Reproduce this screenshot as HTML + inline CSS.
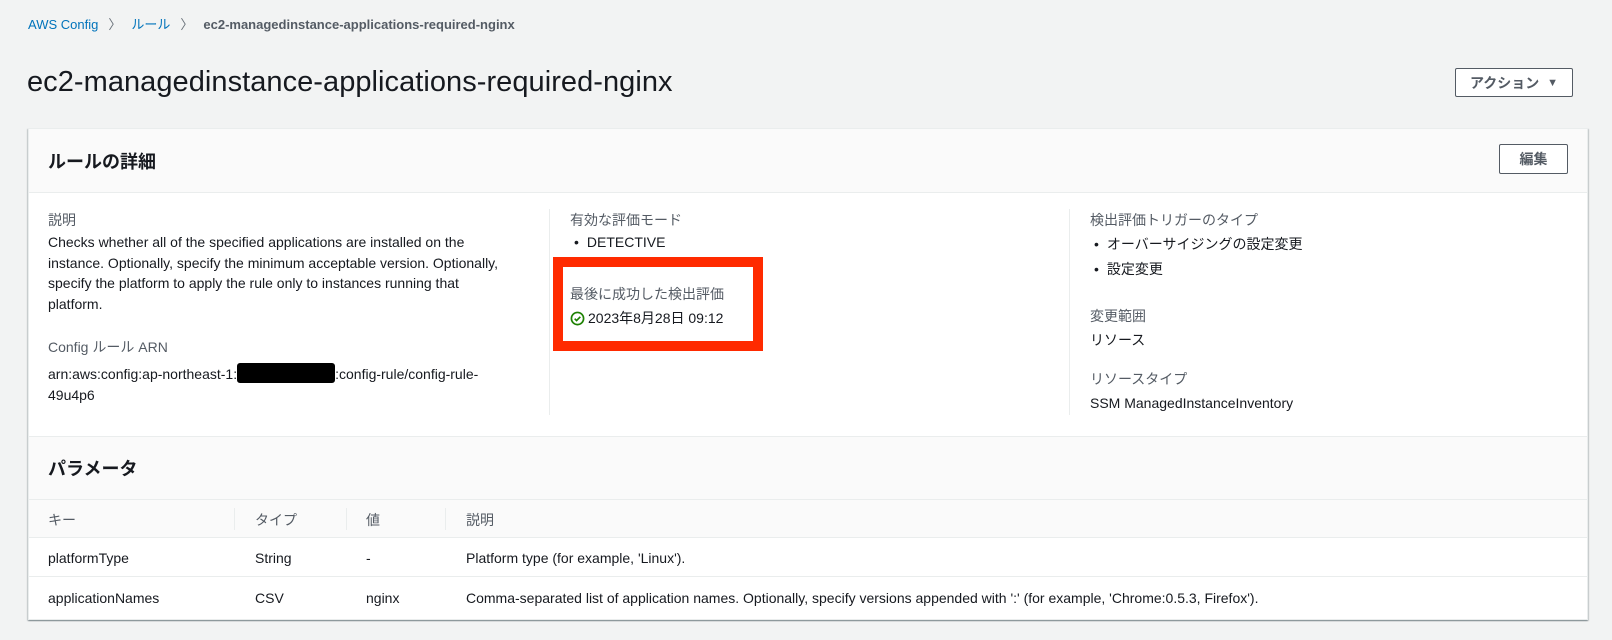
<!DOCTYPE html>
<html><head><meta charset="utf-8"><style>
*{box-sizing:border-box;margin:0;padding:0}
body{width:1612px;height:640px;background:#f2f3f3;font-family:"Liberation Sans","Noto Sans CJK JP",sans-serif;color:#16191f;font-size:14px;position:relative;overflow:hidden}
.a{position:absolute;white-space:nowrap}
.lbl{color:#545b64}
.link{color:#0073bb}
.card{position:absolute;left:28px;top:128px;width:1560px;height:492px;background:#fff;border:1px solid #eaeded;box-shadow:0 1px 1px rgba(0,28,36,.3),1px 1px 1px rgba(0,28,36,.15),-1px 1px 1px rgba(0,28,36,.15)}
.btn{position:absolute;border:1px solid #545b64;background:#fff;color:#545b64;font-weight:bold;font-size:14px;display:flex;align-items:center;justify-content:center;border-radius:2px}
.hd{position:absolute;left:0;width:100%;background:#fafafa;border-bottom:1px solid #eaeded}
.vl{position:absolute;width:1px;background:#eaeded}
.hl{position:absolute;left:0;width:100%;height:1px;background:#eaeded}
</style></head><body>
<div class="a" style="left:28px;top:14px;font-size:13px"><span class="link">AWS Config</span><span style="color:#687078;margin:0 10px">〉</span><span class="link">ルール</span><span style="color:#687078;margin:0 10px">〉</span><span style="color:#545b64;font-weight:bold">ec2-managedinstance-applications-required-nginx</span></div>
<div class="a" style="left:27px;top:66px;font-size:29px;letter-spacing:0.05px;color:#16191f">ec2-managedinstance-applications-required-nginx</div>
<div class="btn" style="left:1455px;top:68px;width:118px;height:29px">アクション&nbsp;&nbsp;<span style="font-size:11px">▼</span></div>
<div class="card">
 <div class="hd" style="top:0;height:64px"></div>
 <div class="a" style="left:19px;top:19px;font-size:18px;font-weight:bold">ルールの詳細</div>
 <div class="btn" style="left:1470px;top:15px;width:69px;height:30px">編集</div>
 <div class="vl" style="left:520px;top:80px;height:206px"></div>
 <div class="vl" style="left:1040px;top:80px;height:206px"></div>
 <div class="a lbl" style="left:19px;top:81px">説明</div>
 <div class="a" style="left:19px;top:103px;line-height:20.5px;white-space:normal;width:458px">Checks whether all of the specified applications are installed on the instance. Optionally, specify the minimum acceptable version. Optionally, specify the platform to apply the rule only to instances running that platform.</div>
 <div class="a lbl" style="left:19px;top:208px">Config ルール ARN</div>
 <div class="a" style="left:19px;top:234px;line-height:20.5px">arn:aws:config:ap-northeast-1:<span style="display:inline-block;width:98px;height:20px;background:#000;vertical-align:-4px;border-radius:3px"></span>:config-rule/config-rule-<br>49u4p6</div>
 <div class="a lbl" style="left:541px;top:81px">有効な評価モード</div>
 <div class="a" style="left:541px;top:105px"><span style="margin:0 8px 0 4px">•</span>DETECTIVE</div>
 <div class="a" style="left:524px;top:128px;width:210px;height:94px;border:10px solid #ff2a00"></div>
 <div class="a lbl" style="left:541px;top:155px">最後に成功した検出評価</div>
 <div class="a" style="left:541px;top:179px"><svg width="15" height="15" viewBox="0 0 16 16" style="vertical-align:-3px;margin-right:3px"><circle cx="8" cy="8" r="6.5" fill="none" stroke="#1d8102" stroke-width="1.8"/><path d="M5 8.2l2 2 4-4" fill="none" stroke="#1d8102" stroke-width="1.8"/></svg>2023年8月28日 09:12</div>
 <div class="a lbl" style="left:1061px;top:81px">検出評価トリガーのタイプ</div>
 <div class="a" style="left:1061px;top:105px"><span style="margin:0 8px 0 4px">•</span>オーバーサイジングの設定変更</div>
 <div class="a" style="left:1061px;top:130px"><span style="margin:0 8px 0 4px">•</span>設定変更</div>
 <div class="a lbl" style="left:1061px;top:177px">変更範囲</div>
 <div class="a" style="left:1061px;top:201px">リソース</div>
 <div class="a lbl" style="left:1061px;top:240px">リソースタイプ</div>
 <div class="a" style="left:1061px;top:266px">SSM ManagedInstanceInventory</div>
 <div class="hd" style="top:307px;height:64px;border-top:1px solid #eaeded"></div>
 <div class="a" style="left:19px;top:326px;font-size:18px;font-weight:bold">パラメータ</div>
 <div class="hd" style="top:371px;height:38px"></div>
 <div class="vl" style="left:205px;top:379px;height:22px"></div>
 <div class="vl" style="left:317px;top:379px;height:22px"></div>
 <div class="vl" style="left:416px;top:379px;height:22px"></div>
 <div class="a lbl" style="left:19px;top:381px">キー</div>
 <div class="a lbl" style="left:226px;top:381px">タイプ</div>
 <div class="a lbl" style="left:337px;top:381px">値</div>
 <div class="a lbl" style="left:437px;top:381px">説明</div>
 <div class="hl" style="top:447px"></div>
 <div class="a" style="left:19px;top:421px">platformType</div>
 <div class="a" style="left:226px;top:421px">String</div>
 <div class="a" style="left:337px;top:421px">-</div>
 <div class="a" style="left:437px;top:421px">Platform type (for example, 'Linux').</div>
 <div class="a" style="left:19px;top:461px">applicationNames</div>
 <div class="a" style="left:226px;top:461px">CSV</div>
 <div class="a" style="left:337px;top:461px">nginx</div>
 <div class="a" style="left:437px;top:461px">Comma-separated list of application names. Optionally, specify versions appended with ':' (for example, 'Chrome:0.5.3, Firefox').</div>
</div>
</body></html>
